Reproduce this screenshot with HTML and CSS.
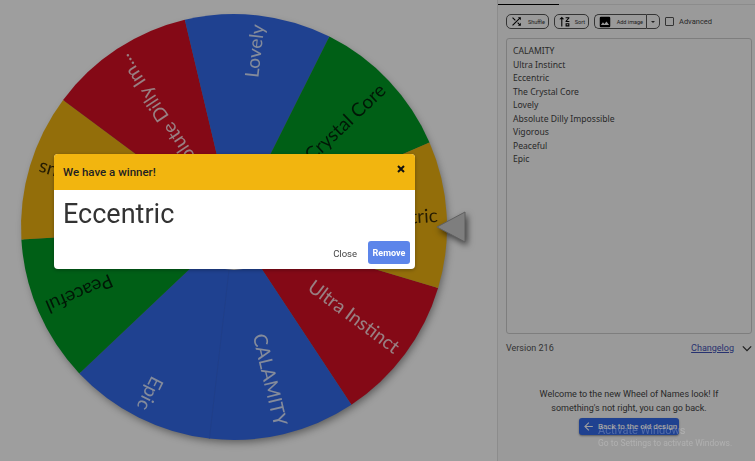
FILE: index.html
```html
<!DOCTYPE html>
<html>
<head>
    <title>Wheel of Names</title>
    <link rel="stylesheet" href="styles.css">
</head>
<body>
    <div class="page">
        <div class="wheel-area">
            <svg class="wheel" width="497" height="461" viewBox="0 0 497 461">
                <defs>
                    <filter id="wheel-shadow" x="-10%" y="-10%" width="120%" height="120%">
                        <feDropShadow dx="2" dy="4" stdDeviation="4" flood-color="#000" flood-opacity="0.45"/>
                    </filter>
                </defs>
                <g transform="translate(234 227)">
                    <circle r="211" fill="#888" filter="url(#wheel-shadow)"/>
                    <path fill="#d50f25" d="M 0 0 L 204.1 61 A 213 213 0 0 1 117.4 177.7 Z"/>
                    <path fill="#3369e8" d="M 0 0 L 117.4 177.7 A 213 213 0 0 1 -24.6 211.6 Z"/>
                    <path fill="#3369e8" d="M 0 0 L -24.6 211.6 A 213 213 0 0 1 -154.7 146.4 Z"/>
                    <path fill="#009925" d="M 0 0 L -154.7 146.4 A 213 213 0 0 1 -212.6 12.6 Z"/>
                    <path fill="#eeb211" d="M 0 0 L -212.6 12.6 A 213 213 0 0 1 -170.9 -127.1 Z"/>
                    <path fill="#d50f25" d="M 0 0 L -170.9 -127.1 A 213 213 0 0 1 -49.2 -207.2 Z"/>
                    <path fill="#3369e8" d="M 0 0 L -49.2 -207.2 A 213 213 0 0 1 95.4 -190.4 Z"/>
                    <path fill="#009925" d="M 0 0 L 95.4 -190.4 A 213 213 0 0 1 195.5 -84.6 Z"/>
                    <path fill="#eeb211" d="M 0 0 L 195.5 -84.6 A 213 213 0 0 1 204.1 61 Z"/>
                    <path class="seam" d="M 0 0 L -24.6 211.6"/>
                    <text class="slice-label dark" transform="rotate(-3.4)" x="204" y="7">Eccentric</text>
                    <text class="slice-label light" transform="rotate(36.6)" x="204" y="7">Ultra Instinct</text>
                    <text class="slice-label light" transform="rotate(76.6)" x="204" y="7">CALAMITY</text>
                    <text class="slice-label light" transform="rotate(116.6)" x="204" y="7">Epic</text>
                    <text class="slice-label dark" transform="rotate(156.6)" x="204" y="7">Peaceful</text>
                    <text class="slice-label dark" transform="rotate(196.6)" x="204" y="7">Vigorous</text>
                    <text class="slice-label light" transform="rotate(236.6)" x="204" y="7">Absolute Dilly Im...</text>
                    <text class="slice-label light" transform="rotate(276.6)" x="204" y="7">Lovely</text>
                    <text class="slice-label dark" transform="rotate(316.6)" x="204" y="7">The Crystal Core</text>
                    <circle r="43" fill="#fff"/>
                </g>
                <path class="pointer" d="M 437 227 L 465 212 L 465 242 Z"/>
            </svg>
        </div>

        <div class="side-panel">
            <div class="tabs"><span class="tab-active"></span></div>
            <div class="toolbar">
                <button class="tool-btn btn-shuffle">
                    <svg width="13" height="13" viewBox="0 0 24 24"><path d="M10.59 9.17 5.41 4 4 5.41l5.17 5.17 1.42-1.41zM14.5 4l2.04 2.04L4 18.59 5.41 20 17.96 7.46 20 9.5V4h-5.5zm.33 9.41-1.41 1.41 3.13 3.13L14.5 20H20v-5.5l-2.04 2.04-3.13-3.13z"/></svg>
                    <span>Shuffle</span>
                </button>
                <button class="tool-btn btn-sort">
                    <svg width="13" height="13" viewBox="0 0 24 24"><path d="M7 3 2.500 8H6v13h2V8h3.500L7 3zm7 1h7v2l-4.500 5H21v2h-7v-2l4.500-5H14V4zm0 11h7v6h-7v-6zm2 2v2h3v-2h-3z"/></svg>
                    <span>Sort</span>
                </button>
                <div class="split-btn">
                    <button class="tool-btn split-main">
                        <svg width="14" height="14" viewBox="0 0 24 24"><path d="M21 5v14a2 2 0 0 1-2 2H5a2 2 0 0 1-2-2V5a2 2 0 0 1 2-2h14a2 2 0 0 1 2 2zM5 17h14l-4.500-6-3.500 4.500-2.500-3L5 17z"/></svg>
                        <span>Add image</span>
                    </button>
                    <button class="split-arrow"><span class="caret"></span></button>
                </div>
                <label class="check-label"><span class="checkbox"></span>Advanced</label>
            </div>
            <div class="names-box">
                <div>CALAMITY</div>
                <div>Ultra Instinct</div>
                <div>Eccentric</div>
                <div>The Crystal Core</div>
                <div>Lovely</div>
                <div>Absolute Dilly Impossible</div>
                <div>Vigorous</div>
                <div>Peaceful</div>
                <div>Epic</div>
            </div>
            <div class="version-row">
                <span>Version 216</span>
                <a class="changelog">Changelog</a>
                <svg class="chevron" width="10" height="7" viewBox="0 0 12 8"><path d="M1 1.500 6 6.500 11 1.500"/></svg>
            </div>
            <div class="welcome">
                <p>Welcome to the new Wheel of Names look! If something's not right, you can go back.</p>
                <button class="back-btn">
                    <svg width="13" height="13" viewBox="0 0 24 24"><path d="M20 11H7.800l5.600-5.600L12 4l-8 8 8 8 1.400-1.400L7.800 13H20z"/></svg>
                    <span>Back to the old design</span>
                </button>
            </div>
        </div>
    </div>

    <div class="overlay"></div>

    <div class="dialog">
        <div class="dialog-head">
            <span>We have a winner!</span>
            <svg class="dialog-x" width="8" height="8" viewBox="0 0 8 8"><path d="M1 1 7 7M7 1 1 7"/></svg>
        </div>
        <div class="dialog-body">Eccentric</div>
        <div class="dialog-actions">
            <button class="btn-close">Close</button>
            <button class="btn-remove">Remove</button>
        </div>
    </div>

    <div class="watermark">
        <div class="wm-title">Activate Windows</div>
        <div class="wm-sub">Go to Settings to activate Windows.</div>
    </div>
</body>
</html>
```

FILE: styles.css
```css
html, body {
    margin: 0;
    padding: 0;
    height: 461px;
    overflow: hidden;
}

body {
    font-family: Roboto, "Liberation Sans", sans-serif;
    background-color: #ffffff;
    color: #222222;
}

button {
    font-family: inherit;
    cursor: pointer;
}

.page {
    display: flex;
    height: 461px;
}

.wheel-area {
    width: 497px;
    flex: none;
}

.wheel {
    display: block;
}

.seam {
    stroke: #3065e0;
    stroke-width: 1;
}

.slice-label {
    font-family: Lato, "Noto Sans", sans-serif;
    font-size: 19px;
    font-weight: 400;
    text-anchor: end;
}

.slice-label.dark {
    fill: #000000;
    opacity: 0.75;
}

.slice-label.light {
    fill: #ffffff;
    opacity: 0.8;
}

.pointer {
    fill: #cccccc;
    stroke: #999999;
    stroke-width: 1;
    filter: drop-shadow(2px 3px 3px rgba(0, 0, 0, 0.6));
}

.side-panel {
    flex: 1;
    min-width: 0;
    background-color: #f8f8f8;
    border-left: 1px solid #e2e2e2;
    display: flex;
    flex-direction: column;
    padding: 0 3px 0 8px;
}

.tabs {
    height: 5px;
    margin: 0 -3px 0 -8px;
    border-bottom: 1px solid #e2e2e2;
    box-sizing: border-box;
    position: relative;
}

.tab-active {
    position: absolute;
    left: 0;
    bottom: -1px;
    width: 61px;
    height: 1px;
    background-color: #000000;
}

.toolbar {
    display: flex;
    align-items: center;
    gap: 5px;
    margin-top: 9px;
    height: 15px;
}

.tool-btn {
    display: flex;
    align-items: center;
    justify-content: space-between;
    height: 15px;
    padding: 0 3px;
    box-sizing: border-box;
    background: none;
    border: 1px solid #555555;
    border-radius: 5px;
    font-size: 5.500px;
    color: #333333;
}

.btn-shuffle {
    width: 43px;
}

.btn-sort {
    width: 35px;
}

.split-btn {
    display: flex;
}

.split-main {
    width: 52px;
    border-radius: 5px 0 0 5px;
    border-right: none;
}

.split-arrow {
    width: 14px;
    height: 15px;
    padding: 0;
    box-sizing: border-box;
    background: none;
    border: 1px solid #555555;
    border-radius: 0 5px 5px 0;
    display: flex;
    align-items: center;
    justify-content: center;
}

.caret {
    width: 0;
    height: 0;
    border-left: 2px solid transparent;
    border-right: 2px solid transparent;
    border-top: 2px solid #333333;
}

.check-label {
    display: flex;
    align-items: center;
    gap: 5px;
    font-size: 7.500px;
    color: #444444;
}

.checkbox {
    width: 7px;
    height: 7px;
    border: 1px solid #555555;
    border-radius: 1px;
}

.names-box {
    margin-top: 9px;
    height: 296px;
    box-sizing: border-box;
    border: 1px solid #cccccc;
    border-radius: 3px;
    padding: 6px 6px;
    font-family: "Noto Sans", "Open Sans", sans-serif;
    font-size: 8.600px;
    line-height: 13.500px;
    color: #444444;
}

.version-row {
    display: flex;
    align-items: center;
    margin-top: 9px;
    font-size: 9px;
    color: #555555;
}

.changelog {
    margin-left: auto;
    color: #3f51b5;
    text-decoration: underline;
}

.chevron {
    margin: 0 0 0 8px;
    fill: none;
    stroke: #333333;
    stroke-width: 1.500;
}

.welcome {
    margin-top: 34px;
    text-align: center;
    font-size: 9px;
    line-height: 14px;
    color: #444444;
    display: flex;
    flex-direction: column;
    align-items: center;
}

.welcome p {
    margin: 0;
    width: 190px;
}

.back-btn {
    display: flex;
    align-items: center;
    gap: 3px;
    margin-top: 3px;
    height: 17px;
    width: 100px;
    padding: 0 3px;
    border: none;
    border-radius: 3px;
    background-color: #3369e8;
    color: #ffffff;
    font-size: 8px;
    font-weight: 500;
    white-space: nowrap;
    box-shadow: 0 1px 2px rgba(0, 0, 0, 0.4);
}

.back-btn svg {
    fill: #ffffff;
    flex: none;
}

.overlay {
    position: fixed;
    inset: 0;
    background-color: rgba(0, 0, 0, 0.38);
}

.dialog {
    position: fixed;
    left: 54px;
    top: 154px;
    width: 361px;
    height: 115px;
    background-color: #ffffff;
    border-radius: 4px;
    overflow: hidden;
    box-shadow: 0 1px 4px rgba(0, 0, 0, 0.3);
    display: flex;
    flex-direction: column;
}

.dialog-head {
    height: 36px;
    flex: none;
    display: flex;
    justify-content: space-between;
    padding: 11px 10px 0 9px;
    box-sizing: border-box;
    background-color: #f2b50f;
    font-size: 11.500px;
    font-weight: 500;
    line-height: 15px;
    color: #222222;
}

.dialog-x {
    margin-top: 0;
    fill: none;
    stroke: #111111;
    stroke-width: 2;
}

.dialog-body {
    padding: 9px 9px 0;
    font-size: 27px;
    font-weight: 400;
    line-height: 31px;
    color: #333333;
}

.dialog-actions {
    margin-top: auto;
    display: flex;
    justify-content: flex-end;
    align-items: center;
    gap: 6px;
    padding: 0 5px 5px 0;
}

.btn-close {
    background: none;
    border: none;
    padding: 1px 5px 0;
    font-size: 9.500px;
    color: #444444;
}

.btn-remove {
    width: 42px;
    height: 23px;
    padding: 1px 0 0;
    border: none;
    border-radius: 3px;
    background-color: #5c85ea;
    color: #ffffff;
    font-size: 9px;
    font-weight: 700;
}

.watermark {
    position: fixed;
    left: 598px;
    top: 424px;
    color: rgba(255, 255, 255, 0.22);
    white-space: nowrap;
}

.wm-title {
    font-size: 11px;
    line-height: 14px;
}

.wm-sub {
    font-size: 8.500px;
    line-height: 10px;
}
```
